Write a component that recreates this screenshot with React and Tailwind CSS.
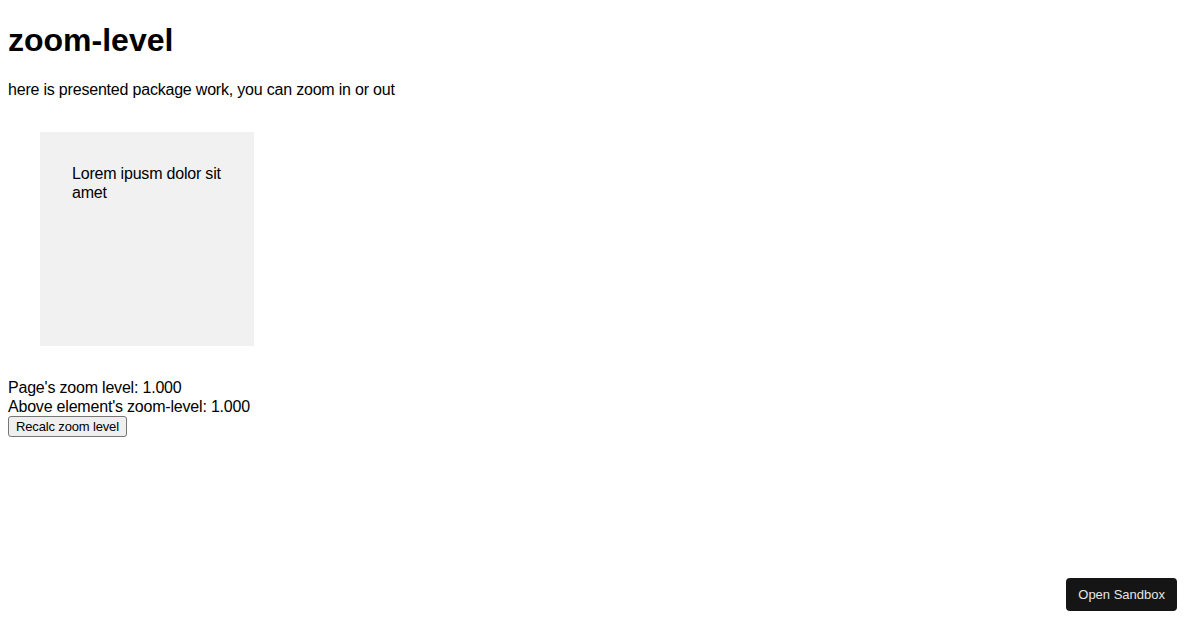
export default function App() {
  return (
    <div className="min-h-[630px] bg-white px-2 pb-2 pt-[21px] font-['Liberation_Sans',Arial,sans-serif] text-base leading-[1.2] tracking-[-0.2px] text-black">
      <h1 className="mb-[21px] text-[32px] font-bold leading-[1.2] tracking-normal">zoom-level</h1>
      <p>here is presented package work, you can zoom in or out</p>

      <div className="mx-8 my-8 h-[214px] w-[214px] bg-[#f1f1f1] p-8">
        <p>Lorem ipusm dolor sit amet</p>
      </div>

      <div>Page's zoom level: 1.000</div>
      <div>Above element's zoom-level: 1.000</div>
      <button className="rounded-[3px] border border-[#767676] bg-[#efefef] px-[7px] py-[2px] text-[13px] leading-[normal] tracking-[-0.15px] text-black">
        Recalc zoom level
      </button>

      <button className="fixed bottom-[19px] right-[23px] h-[33px] rounded-[4px] bg-[#151515] px-3 text-[13px] tracking-normal text-[#e5e5e5]">
        Open Sandbox
      </button>
    </div>
  );
}
